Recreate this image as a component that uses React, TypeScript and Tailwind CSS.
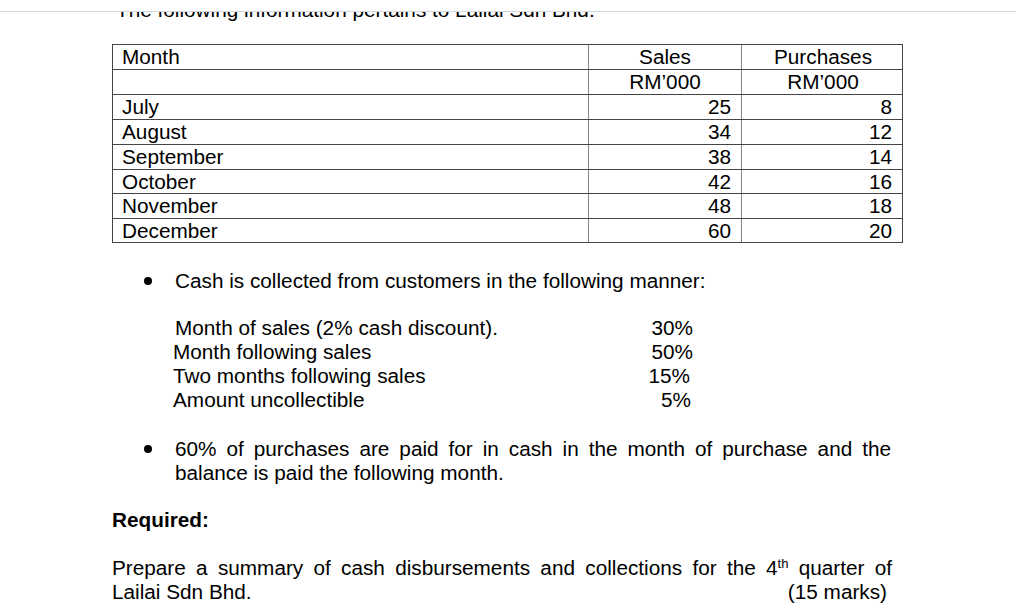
import React from "react";

const rows: { m: string; s: string; p: string; h: string }[] = [
  { m: "July", s: "25", p: "8", h: "h-[25px]" },
  { m: "August", s: "34", p: "12", h: "h-[25px]" },
  { m: "September", s: "38", p: "14", h: "h-[25px]" },
  { m: "October", s: "42", p: "16", h: "h-[24px]" },
  { m: "November", s: "48", p: "18", h: "h-[25px]" },
  { m: "December", s: "60", p: "20", h: "h-[25px]" },
];

const lastH = "h-[24px]";

function Row({
  a,
  b,
  c,
  h,
  top,
  header,
}: {
  a: string;
  b: string;
  c: string;
  h: string;
  top: boolean;
  header?: boolean;
}) {
  return (
    <div className={`flex ${h} ${top ? "border-t border-[#454545]" : ""}`}>
      <div className="w-[475px] pl-[9px] flex items-center">{a}</div>
      <div
        className={`w-[153px] border-l border-[#858585] flex items-center ${
          header ? "justify-center" : "justify-end pr-[10px]"
        }`}
      >
        {b}
      </div>
      <div
        className={`w-[161px] border-l border-[#858585] flex items-center ${
          header ? "justify-center pl-[2px]" : "justify-end pr-[10px]"
        }`}
      >
        {c}
      </div>
    </div>
  );
}

function Bullet() {
  return (
    <div className="w-[63px] shrink-0 pl-[32px] h-[24px] flex items-center">
      <div className="w-[8px] h-[8px] shrink-0 rounded-full bg-black" />
    </div>
  );
}

export default function App() {
  return (
    <div
      className="w-[1016px] h-[612px] bg-white overflow-hidden flex flex-col text-black text-[20.75px] leading-[24px]"
      style={{ fontFamily: '"Liberation Sans", Arial, sans-serif' }}
    >
      <div className="h-[12px] shrink-0 border-b border-[#d2d8de]" />
      <div className="flex-1 overflow-hidden">
        <div className="mt-[-14px] pl-[116px] whitespace-nowrap">
          The following information pertains to Lailai Sdn Bhd.
        </div>

        <div className="mt-[22px] ml-[112px] w-[791px] border border-[#454545]">
          <Row a="Month" b="Sales" c="Purchases" h="h-[24px]" top={false} header />
          <Row a="" b="RM’000" c="RM’000" h="h-[25px]" top header />
          {rows.map((r, i) => (
            <Row
              key={r.m}
              a={r.m}
              b={r.s}
              c={r.p}
              h={i === rows.length - 1 ? lastH : r.h}
              top
            />
          ))}
        </div>

        <div className="mt-[26px] flex pl-[112px]">
          <Bullet />
          <div>Cash is collected from customers in the following manner:</div>
        </div>

        <div className="mt-[23px] pl-[173px] flex flex-col">
          <div className="flex w-[520px] justify-between">
            <span className="pl-[2px]">Month of sales (2% cash discount).</span>
            <span>30%</span>
          </div>
          <div className="flex w-[520px] justify-between">
            <span>Month following sales</span>
            <span>50%</span>
          </div>
          <div className="flex w-[520px] justify-between">
            <span>Two months following sales</span>
            <span className="pr-[3px]">15%</span>
          </div>
          <div className="flex w-[520px] justify-between">
            <span>Amount uncollectible</span>
            <span className="pr-[2px]">5%</span>
          </div>
        </div>

        <div className="mt-[25px] flex pl-[112px]">
          <Bullet />
          <div className="w-[716px]">
            <div className="text-justify [text-align-last:justify]">
              60% of purchases are paid for in cash in the month of purchase and the
            </div>
            <div>balance is paid the following month.</div>
          </div>
        </div>

        <div className="mt-[23px] pl-[112px] font-bold">Required:</div>

        <div className="mt-[24px] pl-[112px] w-[892px]">
          <div className="text-justify [text-align-last:justify]">
            Prepare a summary of cash disbursements and collections for the 4
            <span className="text-[13px] leading-none relative top-[-7px]">th</span> quarter of
          </div>
          <div className="flex justify-between pr-[5px]">
            <span>Lailai Sdn Bhd.</span>
            <span>(15 marks)</span>
          </div>
        </div>
      </div>
    </div>
  );
}
